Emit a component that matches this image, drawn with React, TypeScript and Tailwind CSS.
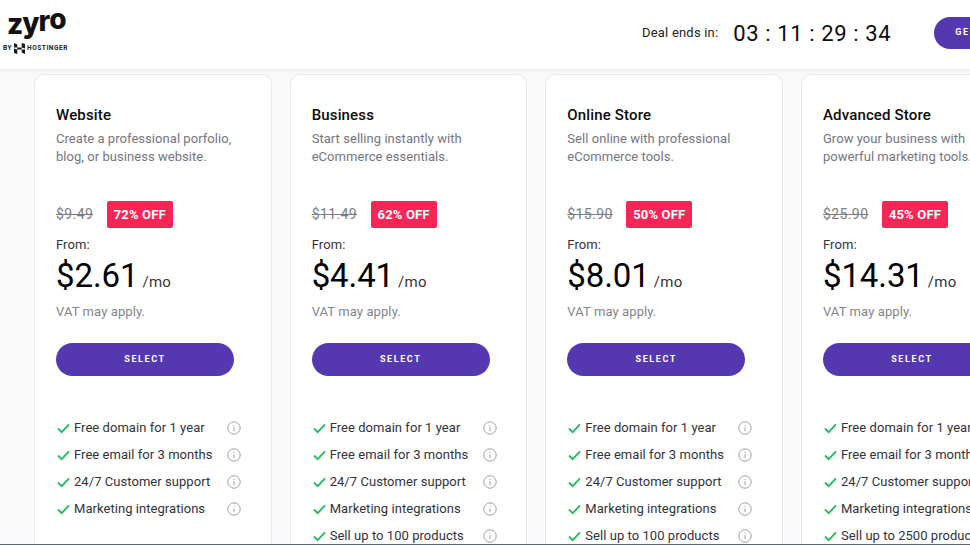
const plans = [
  {
    name: "Website",
    desc: ["Create a professional porfolio,", "blog, or business website."],
    old: "$9.49",
    off: "72% OFF",
    price: "$2.61",
    features: ["Free domain for 1 year", "Free email for 3 months", "24/7 Customer support", "Marketing integrations"],
  },
  {
    name: "Business",
    desc: ["Start selling instantly with", "eCommerce essentials."],
    old: "$11.49",
    off: "62% OFF",
    price: "$4.41",
    features: ["Free domain for 1 year", "Free email for 3 months", "24/7 Customer support", "Marketing integrations", "Sell up to 100 products"],
  },
  {
    name: "Online Store",
    desc: ["Sell online with professional", "eCommerce tools."],
    old: "$15.90",
    off: "50% OFF",
    price: "$8.01",
    features: ["Free domain for 1 year", "Free email for 3 months", "24/7 Customer support", "Marketing integrations", "Sell up to 100 products"],
  },
  {
    name: "Advanced Store",
    desc: ["Grow your business with", "powerful marketing tools."],
    old: "$25.90",
    off: "45% OFF",
    price: "$14.31",
    features: ["Free domain for 1 year", "Free email for 3 months", "24/7 Customer support", "Marketing integrations", "Sell up to 2500 products"],
  },
];

const Check = () => (
  <svg viewBox="0 0 14 12" className="w-[13px] h-[11px] ml-[1px] shrink-0" fill="none" stroke="#22bd5c" strokeWidth="2">
    <path d="M1 6 L5 10 L13 1.6" />
  </svg>
);

const Info = () => (
  <svg viewBox="0 0 14 14" className="w-[14px] h-[14px] shrink-0" fill="none" stroke="#a0a0a0" strokeWidth="1">
    <circle cx="7" cy="7" r="6.2" />
    <path d="M7 6.2 V10.2" />
    <path d="M7 4 V5" />
  </svg>
);

const Logo = () => (
  <div className="w-[70px] pl-[3px] pt-[11px] shrink-0 h-full">
    <div className="flex items-end h-[27px] pl-[4px] text-[28px] leading-[27px] font-extrabold text-[#111] font-['Inter',sans-serif]">
      <span className="tracking-[-1px]">z</span>
      <span className="tracking-[-1px] -translate-y-[1px]">y</span>
      <span className="tracking-[-1px] -translate-y-[3px]">r</span>
      <span className="-translate-y-[5px]">o</span>
    </div>
    <div className="flex items-center mt-[5px] gap-[1px] text-[6.5px] font-bold leading-[11px] tracking-[0.55px] text-[#222]">
      <span>BY</span>
      <svg viewBox="0 0 10 10" className="w-[11px] h-[11px] mx-[1px]" fill="#1a1a1a">
        <path d="M0 0 L3 1.4 V4 L0 4 Z M7 0 L10 1 V5 L7 4 Z M0 5 L3 6 V10 L0 9 Z M7 6 H10 V10 L7 8.6 Z M3 4 H7 V6 H3 Z" />
      </svg>
      <span>HOSTINGER</span>
    </div>
  </div>
);

const Card = ({ plan }: { plan: (typeof plans)[number] }) => (
  <div className="w-[237.67px] h-[470px] shrink-0 rounded-t-[10px] border border-b-0 border-[#e9e9ec] bg-white pl-[21px] pt-[30px]">
    <h3 className="text-[15px] leading-[20px] font-medium tracking-[0.15px] text-[#0c0c0c] whitespace-nowrap">{plan.name}</h3>
    <p className="mt-[5px] text-[13px] leading-[18px] tracking-[0.05px] text-[#75757f] whitespace-nowrap">
      {plan.desc[0]}
      <br />
      {plan.desc[1]}
    </p>
    <div className="mt-[35px] flex items-center gap-[13.5px] h-[27px]">
      <span className="text-[14px] tracking-[0.4px] text-[#7c7c84] line-through">{plan.old}</span>
      <span className="h-[27px] px-[7px] rounded-[2px] bg-[#fb2456] text-white text-[13px] leading-[27px] font-bold tracking-[0.15px]">{plan.off}</span>
    </div>
    <p className="mt-[8px] text-[13px] leading-[18px] tracking-[0.1px] text-[#33333a]">From:</p>
    <div className="flex items-baseline h-[40px] mt-[2px] leading-[40px] whitespace-nowrap">
      <span className="text-[33px] tracking-[-0.1px] text-black">{plan.price}</span>
      <span className="ml-[4px] text-[15px] tracking-[0.3px] text-[#33333a]">/mo</span>
    </div>
    <p className="mt-[7px] text-[13px] leading-[18px] tracking-[0.1px] text-[#85858c]">VAT may apply.</p>
    <button className="mt-[22px] block w-[178px] h-[33px] rounded-full bg-[#5537b0] text-white text-[9px] font-bold tracking-[1.6px]">SELECT</button>
    <ul className="mt-[43px] flex flex-col gap-[9px]">
      {plan.features.map((f) => (
        <li key={f} className="flex items-center h-[18px] w-[185px] text-[13px] tracking-[0.05px] text-[#33333a] whitespace-nowrap">
          <Check />
          <span className="ml-[4px] flex-1">{f}</span>
          <Info />
        </li>
      ))}
    </ul>
  </div>
);

export default function App() {
  return (
    <div className="w-[970px] h-[545px] overflow-hidden flex flex-col bg-[#fafafa] font-['Roboto',sans-serif]">
      <header className="relative z-10 h-[69px] shrink-0 bg-white shadow-[0_1px_4px_rgba(0,0,0,0.1)] flex items-start overflow-hidden">
        <Logo />
        <div className="ml-[572px] shrink-0 flex items-center h-[66px]">
          <span className="text-[13px] tracking-[0.2px] text-[#222]">Deal ends in:</span>
          <span className="ml-[15px] text-[22px] tracking-[0.6px] text-[#0c0c0c] whitespace-nowrap">03 : 11 : 29 : 34</span>
          <button className="ml-[43px] shrink-0 h-[32px] w-[140px] rounded-full bg-[#5537b0] text-white text-[9px] font-bold tracking-[1.6px] text-left pl-[21px] whitespace-nowrap">GET STARTED</button>
        </div>
      </header>
      <main className="flex-1 min-h-0 overflow-hidden flex gap-[18px] pl-[34px] pt-[5px]">
        {plans.map((p) => (
          <Card key={p.name} plan={p} />
        ))}
      </main>
      <div className="h-px shrink-0 bg-[#5c6670]" />
    </div>
  );
}
